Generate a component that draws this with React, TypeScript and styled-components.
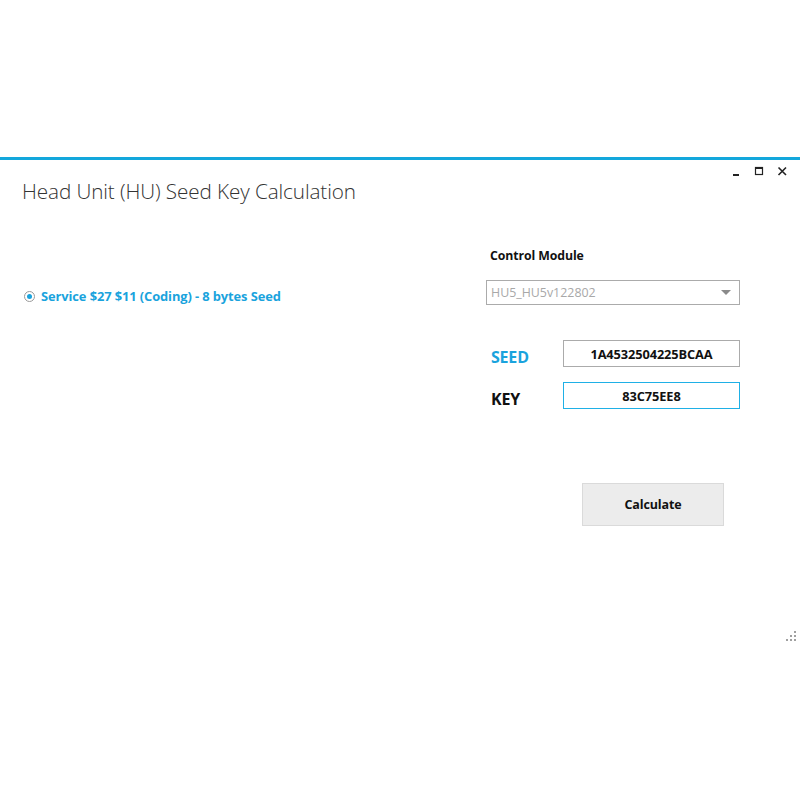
import React from "react";
import styled, { createGlobalStyle } from "styled-components";

const Global = createGlobalStyle`
  html, body { margin: 0; padding: 0; background: #ffffff; }
  body { font-family: "Open Sans", "Noto Sans", sans-serif; }
`;

const Page = styled.div`
  width: 800px;
  height: 800px;
  padding-top: 157px;
  box-sizing: border-box;
  background: #fff;
`;

const Window = styled.div`
  position: relative;
  height: 485px;
  border-top: 3px solid #13a7dc;
  background: #fff;
  display: flex;
  flex-direction: column;
`;

const TitleBar = styled.div`
  display: flex;
  justify-content: space-between;
  align-items: flex-start;
  padding: 0 12px 0 22px;
`;

const Title = styled.h1`
  margin: 17px 0 0 0;
  font-family: "Open Sans", sans-serif;
  font-weight: 300;
  font-size: 20.7px;
  letter-spacing: -0.1px;
  color: #333;
  line-height: 28px;
`;

const Controls = styled.div`
  display: flex;
  align-items: center;
  gap: 12px;
  margin-top: 6px;
`;

const CtrlBtn = styled.div`
  width: 11px;
  height: 11px;
  display: flex;
  align-items: center;
  justify-content: center;
`;

const Body = styled.div`
  display: flex;
  padding-left: 24px;
`;

const Left = styled.div`
  width: 462px;
  padding-top: 82px;
`;

const RadioRow = styled.label`
  display: flex;
  align-items: center;
  gap: 6px;
`;

const RadioDot = styled.span`
  width: 9px;
  height: 9px;
  border: 1px solid #9a9a9a;
  border-radius: 50%;
  display: flex;
  align-items: center;
  justify-content: center;
  &::after {
    content: "";
    width: 5px;
    height: 5px;
    border-radius: 50%;
    background: #1aa3dd;
  }
`;

const RadioText = styled.span`
  font-family: "Open Sans", sans-serif;
  font-weight: 700;
  font-size: 12.9px;
  color: #1aa3dd;
  letter-spacing: -0.1px;
`;

const Right = styled.div`
  width: 254px;
  padding-top: 42px;
  display: flex;
  flex-direction: column;
`;

const FieldLabel = styled.div`
  font-weight: 700;
  font-size: 12.3px;
  color: #111;
  padding-left: 4px;
  letter-spacing: -0.1px;
`;

const Select = styled.div`
  margin-top: 16px;
  height: 25px;
  box-sizing: border-box;
  border: 1px solid #ababab;
  display: flex;
  align-items: center;
  justify-content: space-between;
  padding: 0 8px 0 4px;
  font-size: 12.4px;
  color: #a8a8a8;
`;

const Arrow = styled.span`
  width: 0;
  height: 0;
  border-left: 5px solid transparent;
  border-right: 5px solid transparent;
  border-top: 5px solid #8a8a8a;
`;

const Pair = styled.div<{ $first?: boolean }>`
  display: flex;
  align-items: center;
  justify-content: space-between;
  height: 27px;
  margin-top: ${(p) => (p.$first ? "35px" : "15px")};
`;

const PairLabel = styled.div<{ $blue?: boolean }>`
  padding-left: 5px;
  padding-top: 6px;
  line-height: 20px;
  font-weight: 700;
  font-size: 16px;
  color: ${(p) => (p.$blue ? "#1aa3dd" : "#111")};
  letter-spacing: -0.2px;
`;

const ValueBox = styled.div<{ $focus?: boolean }>`
  width: 177px;
  height: 27px;
  box-sizing: border-box;
  border: 1px solid ${(p) => (p.$focus ? "#1fb0e6" : "#ababab")};
  display: flex;
  align-items: center;
  justify-content: center;
  font-weight: 700;
  font-size: 12.8px;
  color: #111;
  letter-spacing: -0.1px;
`;

const ButtonRow = styled.div`
  display: flex;
  justify-content: flex-end;
  padding-right: 16px;
  margin-top: 74px;
`;

const Button = styled.button`
  width: 142px;
  height: 43px;
  background: #ececec;
  border: 1px solid #dadada;
  font-family: "Open Sans", sans-serif;
  font-weight: 700;
  font-size: 12.5px;
  color: #111;
  letter-spacing: -0.1px;
  padding: 0;
`;

const Grip = styled.div`
  position: absolute;
  right: 4px;
  bottom: 4px;
  display: grid;
  grid-template-columns: repeat(3, 2px);
  grid-template-rows: repeat(3, 2px);
  gap: 2px;
`;

const GripDot = styled.span<{ $on?: boolean }>`
  background: ${(p) => (p.$on ? "#a0a0a0" : "transparent")};
`;

export default function App() {
  const grip = [0, 0, 1, 0, 1, 1, 1, 1, 1];
  return (
    <>
      <Global />
      <Page>
        <Window>
          <TitleBar>
            <Title>Head Unit (HU) Seed Key Calculation</Title>
            <Controls>
              <CtrlBtn>
                <svg width="11" height="11" viewBox="0 0 11 11">
                  <rect x="2" y="8" width="6" height="2" fill="#222" />
                </svg>
              </CtrlBtn>
              <CtrlBtn>
                <svg width="11" height="11" viewBox="0 0 11 11">
                  <rect x="1.5" y="1.5" width="7" height="7" fill="none" stroke="#222" strokeWidth="1.2" />
                  <rect x="1" y="1" width="8" height="2" fill="#222" />
                </svg>
              </CtrlBtn>
              <CtrlBtn>
                <svg width="11" height="11" viewBox="0 0 11 11">
                  <path d="M1.5 1.5 L9 9 M9 1.5 L1.5 9" stroke="#222" strokeWidth="1.6" />
                </svg>
              </CtrlBtn>
            </Controls>
          </TitleBar>
          <Body>
            <Left>
              <RadioRow>
                <RadioDot />
                <RadioText>Service $27 $11 (Coding) - 8 bytes Seed</RadioText>
              </RadioRow>
            </Left>
            <Right>
              <FieldLabel>Control Module</FieldLabel>
              <Select>
                <span>HU5_HU5v122802</span>
                <Arrow />
              </Select>
              <Pair $first>
                <PairLabel $blue>SEED</PairLabel>
                <ValueBox>1A4532504225BCAA</ValueBox>
              </Pair>
              <Pair>
                <PairLabel>KEY</PairLabel>
                <ValueBox $focus>83C75EE8</ValueBox>
              </Pair>
              <ButtonRow>
                <Button>Calculate</Button>
              </ButtonRow>
            </Right>
          </Body>
          <Grip>
            {grip.map((g, i) => (
              <GripDot key={i} $on={!!g} />
            ))}
          </Grip>
        </Window>
      </Page>
    </>
  );
}
